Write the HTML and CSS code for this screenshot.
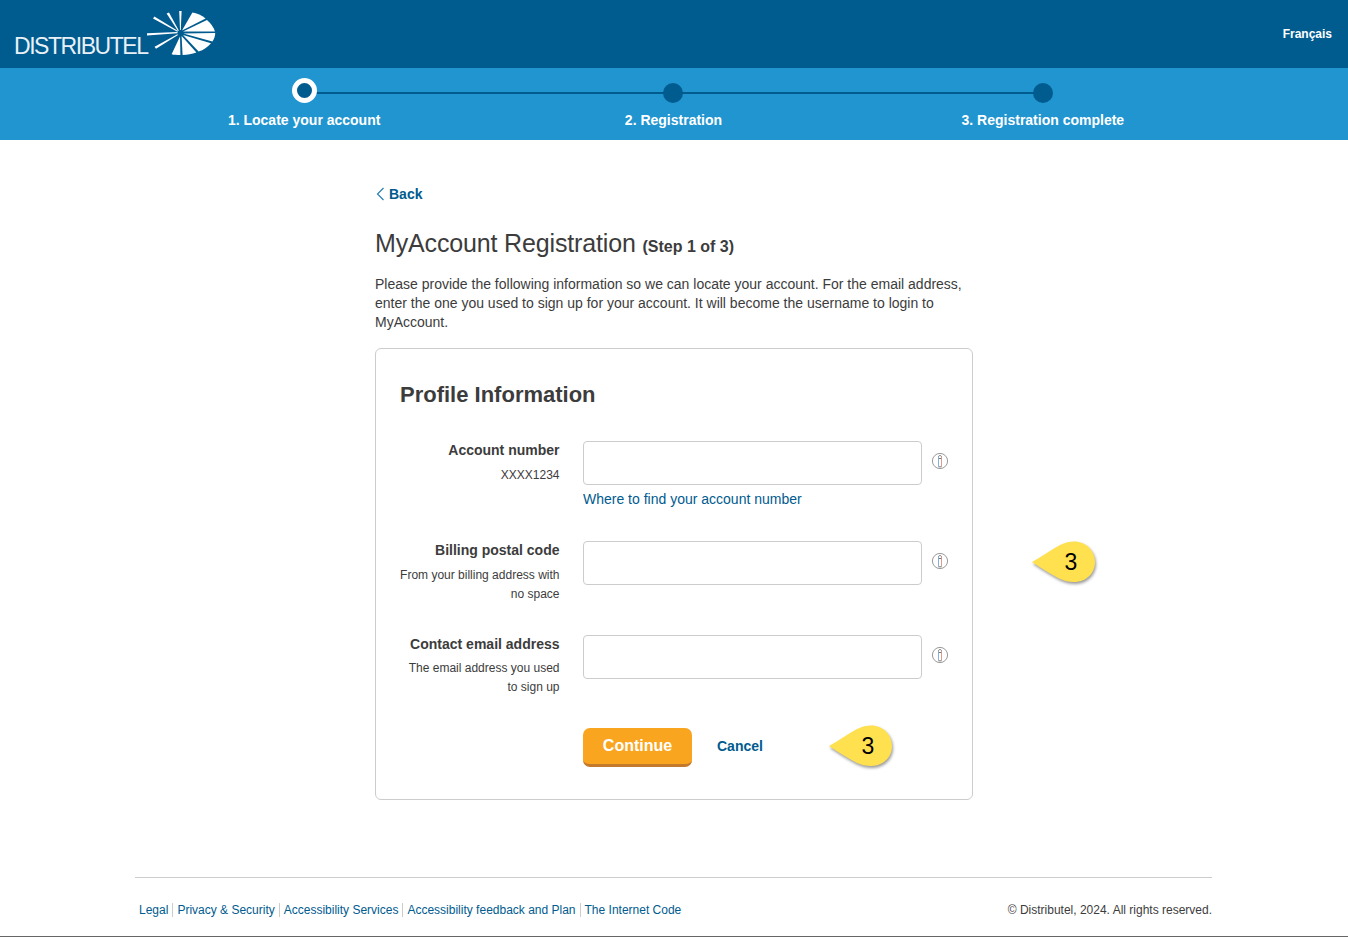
FILE: index.html
```html
<!DOCTYPE html>
<html lang="en">
<head>
<meta charset="utf-8">
<title>MyAccount Registration</title>
<link rel="stylesheet" href="styles.css">
</head>
<body>
<div class="page">
  <header class="topbar">
    <a class="logo" href="#">
      <span class="wordmark">DISTRIBUTEL</span>
      <svg class="sun" viewBox="145 8 72 50" width="72" height="50" aria-hidden="true">
        <path d="M147 33.2 L177.5 32 L177.5 33.2 L147 35.6Z"/>
        <path d="M153 18.4 L154.4 16.6 L178 31 L177.4 31.8Z"/>
        <path d="M166.6 13.6 L169 12.4 L178.8 30.6 L178 31Z"/>
        <path d="M179.2 11 L181.6 11 L180.8 30 L180 30Z"/>
        <path d="M154.6 46.8 L156 48.8 L178 35 L177.4 34.2Z"/>
        <path d="M182 30.6 L192.4 12.4 C197 13 201.6 15 205.6 18.4Z"/>
        <path d="M183 31.6 L207 20 C210.6 23 213.6 27 215 31.6Z"/>
        <path d="M183.4 33.6 L215.2 33 C215.2 36 214.2 39 212.4 41.4Z"/>
        <path d="M183 35 L211 43.2 C207.6 47 203.6 50 198.6 51.6Z"/>
        <path d="M181.6 36 L196.4 52.6 C192 54 187.4 54.8 182.6 55Z"/>
        <path d="M180 36.4 L180.4 55 C177 55 174 54.8 171.6 54.2Z"/>
      </svg>
    </a>
    <a class="lang" href="#">Français</a>
  </header>

  <nav class="stepper">
    <div class="steps">
      <div class="step step-first">
        <span class="dot dot-current"></span>
        <span class="step-label">1. Locate your account</span>
      </div>
      <div class="step step-mid">
        <span class="dot"></span>
        <span class="step-label">2. Registration</span>
      </div>
      <div class="step step-last">
        <span class="dot"></span>
        <span class="step-label">3. Registration complete</span>
      </div>
    </div>
  </nav>

  <main class="content">
    <a class="back" href="#">
      <svg class="back-icon" viewBox="0 0 9 14" width="9" height="14" aria-hidden="true"><path d="M7.5 1 L1.500 7 L7.5 13"/></svg>
      Back
    </a>
    <h1 class="title">MyAccount Registration <small>(Step 1 of 3)</small></h1>
    <p class="intro">Please provide the following information so we can locate your account. For the email address, enter the one you used to sign up for your account. It will become the username to login to MyAccount.</p>

    <section class="card">
      <h2 class="card-title">Profile Information</h2>

      <div class="row">
        <div class="label">
          <strong>Account number</strong>
          <span class="hint">XXXX1234</span>
        </div>
        <div class="field">
          <input class="input" type="text" aria-label="Account number">
          <a class="help" href="#">Where to find your account number</a>
        </div>
        <svg class="info" viewBox="0 0 18 18" width="18" height="18" aria-hidden="true"><circle cx="9" cy="9" r="7.6"/><path class="i-a" d="M7.5 14.5V5"/><path class="i-b" d="M10.5 14.5V5"/><path class="i-c" d="M7.5 5C7.500 3 10.500 3 10.500 5M7.500 14.800H10.500M7.800 6.500H10.200"/></svg>
      </div>

      <div class="row">
        <div class="label">
          <strong>Billing postal code</strong>
          <span class="hint">From your billing address with no space</span>
        </div>
        <div class="field">
          <input class="input" type="text" aria-label="Billing postal code">
        </div>
        <svg class="info" viewBox="0 0 18 18" width="18" height="18" aria-hidden="true"><circle cx="9" cy="9" r="7.6"/><path class="i-a" d="M7.5 14.5V5"/><path class="i-b" d="M10.5 14.5V5"/><path class="i-c" d="M7.5 5C7.500 3 10.500 3 10.500 5M7.500 14.800H10.500M7.800 6.500H10.200"/></svg>
      </div>

      <div class="row row-tight">
        <div class="label">
          <strong>Contact email address</strong>
          <span class="hint">The email address you used to sign up</span>
        </div>
        <div class="field">
          <input class="input" type="email" aria-label="Contact email address">
        </div>
        <svg class="info" viewBox="0 0 18 18" width="18" height="18" aria-hidden="true"><circle cx="9" cy="9" r="7.6"/><path class="i-a" d="M7.5 14.5V5"/><path class="i-b" d="M10.5 14.5V5"/><path class="i-c" d="M7.5 5C7.500 3 10.500 3 10.500 5M7.500 14.800H10.500M7.800 6.500H10.200"/></svg>
      </div>

      <div class="actions">
        <button class="btn" type="button">Continue</button>
        <a class="cancel" href="#">Cancel</a>
      </div>
    </section>
  </main>

  <footer class="footer">
    <ul class="links">
      <li><a href="#">Legal</a></li>
      <li><a href="#">Privacy &amp; Security</a></li>
      <li><a href="#">Accessibility Services</a></li>
      <li><a href="#">Accessibility feedback and Plan</a></li>
      <li><a href="#">The Internet Code</a></li>
    </ul>
    <p class="copy">© Distributel, 2024. All rights reserved.</p>
  </footer>

  <div class="badge badge-side">
    <svg viewBox="0 0 66 46" width="66" height="46" aria-hidden="true"><path d="M1 21 C10 16 20 9 29 4 C34 1.500 39 0.500 43 0.500 C55 0.500 64 9.500 64 21 C64 32.500 55 41 43 41 C38 41 33 40 28 37.500 C19 33 10 27 1 21Z"/></svg>
    <span>3</span>
  </div>
  <div class="badge badge-form">
    <svg viewBox="0 0 66 46" width="66" height="46" aria-hidden="true"><path d="M1 21 C10 16 20 9 29 4 C34 1.500 39 0.500 43 0.500 C55 0.500 64 9.500 64 21 C64 32.500 55 41 43 41 C38 41 33 40 28 37.500 C19 33 10 27 1 21Z"/></svg>
    <span>3</span>
  </div>
</div>
</body>
</html>
```

FILE: styles.css
```css
* { box-sizing: border-box; }

html, body { margin: 0; padding: 0; background: #fff; }

body {
  font-family: "Liberation Sans", Arial, sans-serif;
  font-size: 14px;
  color: #3c3c3c;
}

a { color: #005b8f; text-decoration: none; }

.page {
  position: relative;
  height: 937px;
  border-bottom: 1px solid #666;
  overflow: hidden;
}

/* Header */
.topbar {
  height: 68px;
  background: #005b8f;
  display: flex;
  justify-content: space-between;
  align-items: flex-start;
  padding: 0 16px 0 14px;
}

.logo {
  display: flex;
  align-items: flex-start;
  color: #fff;
}

.wordmark {
  margin-top: 33px;
  font-size: 23px;
  line-height: 27px;
  letter-spacing: -1.45px;
  color: #e9f1f6;
  width: 131px;
  white-space: nowrap;
}

.sun {
  margin-top: 8px;
  fill: #fff;
}

.lang {
  margin-top: 27px;
  color: #fff;
  font-size: 12px;
  font-weight: 700;
  line-height: 15px;
}

/* Stepper */
.stepper {
  height: 72px;
  background: #2095d0;
}

.steps {
  width: 1108px;
  margin-left: 119.5px;
  display: grid;
  grid-template-columns: repeat(3, 1fr);
}

.step {
  position: relative;
  display: flex;
  flex-direction: column;
  align-items: center;
  padding-top: 10px;
  height: 72px;
}

.step::before {
  content: "";
  position: absolute;
  top: 24px;
  height: 2px;
  left: 0;
  right: 0;
  background: #005b8f;
}

.step-first::before { left: 50%; }
.step-last::before { right: 50%; }

.dot {
  position: relative;
  width: 20px;
  height: 20px;
  margin-top: 5px;
  border-radius: 50%;
  background: #005b8f;
}

.dot-current {
  width: 25px;
  height: 25px;
  margin-top: 0;
  border: 5px solid #fff;
}

.step-label {
  position: absolute;
  top: 44px;
  color: #fff;
  font-size: 14px;
  font-weight: 700;
  line-height: 16px;
  white-space: nowrap;
}

/* Content */
.content {
  width: 598px;
  margin: 0 auto 0 375px;
  padding-top: 45px;
}

.back {
  display: flex;
  align-items: center;
  gap: 4px;
  height: 18px;
  font-size: 14px;
  font-weight: 700;
}

.back-icon {
  margin: -1px 0 0 1px;
  fill: none;
  stroke: #2a7fb0;
  stroke-width: 1.2;
}

.title {
  margin: 25px 0 0;
  font-size: 25px;
  font-weight: 400;
  line-height: 30px;
  letter-spacing: -0.15px;
  color: #3c3c3c;
}

.title small {
  font-size: 16px;
  font-weight: 700;
  letter-spacing: 0;
}

.intro {
  margin: 13px 0 0;
  font-size: 14px;
  line-height: 19px;
}

.card {
  margin-top: 16px;
  height: 452px;
  border: 1px solid #ccc;
  border-radius: 6px;
  padding: 32px 24px 0;
}

.card-title {
  margin: 0 0 33px;
  font-size: 22px;
  font-weight: 700;
  line-height: 27px;
  color: #3c3c3c;
}

.row {
  display: grid;
  grid-template-columns: 159.5px 339px 18px;
  column-gap: 23.5px;
  align-items: start;
  padding-bottom: 31px;
}

.row .info { margin: 11px 0 0 -15px; }

.row-tight .hint { margin-top: 5px; }

.label {
  text-align: right;
  line-height: 19px;
}

.label strong {
  display: block;
  font-size: 14px;
  color: #3c3c3c;
}

.hint {
  display: block;
  margin-top: 6px;
  font-size: 12px;
  line-height: 19px;
}

.field { display: flex; flex-direction: column; }

.input {
  display: block;
  width: 339px;
  height: 44px;
  border: 1px solid #ccc;
  border-radius: 4px;
  background: #fff;
  padding: 0 10px;
  font: inherit;
}

.help {
  margin: 4px 0 1px;
  font-size: 14px;
  line-height: 20px;
}

.info {
  fill: none;
  stroke-width: 1;
}

.info circle { stroke: #9a9a9a; }
.i-a { stroke: #7fb2de; }
.i-b { stroke: #e39a86; }
.i-c { stroke: #777; }

.actions {
  display: flex;
  align-items: center;
  margin-left: 183px;
  gap: 25px;
}

.btn {
  width: 109px;
  height: 39px;
  border: 0;
  border-bottom: 3px solid #c47a2c;
  border-radius: 7px;
  background: #f9a51f;
  color: #fff;
  font-family: inherit;
  font-size: 16px;
  font-weight: 700;
  padding: 0;
}

.cancel {
  padding-bottom: 4px;
  font-size: 14px;
  font-weight: 700;
}

/* Footer */
.footer {
  position: absolute;
  left: 135px;
  right: 136px;
  top: 877px;
  border-top: 1px solid #ccc;
  display: flex;
  justify-content: space-between;
  align-items: center;
  height: 59px;
  padding: 5px 0 0 4px;
  font-size: 12px;
}

.links {
  display: flex;
  list-style: none;
  margin: 0;
  padding: 0;
}

.links li {
  line-height: 14px;
  padding: 0 4px;
  border-left: 1px solid #ccc;
}

.links li:first-child {
  padding-left: 0;
  border-left: 0;
}

.copy { margin: 0; }

/* Callout badges */
.badge {
  position: absolute;
  width: 66px;
  height: 46px;
}

.badge svg {
  display: block;
  fill: #ffe14f;
  filter: drop-shadow(1px 2px 1.5px rgba(0, 0, 0, 0.4));
}

.badge span {
  position: absolute;
  left: 32px;
  top: 7px;
  width: 16px;
  text-align: center;
  font-size: 23px;
  line-height: 28px;
  color: #000;
}

.badge-side { left: 1031px; top: 541px; }
.badge-form { left: 828px; top: 725px; }
```
